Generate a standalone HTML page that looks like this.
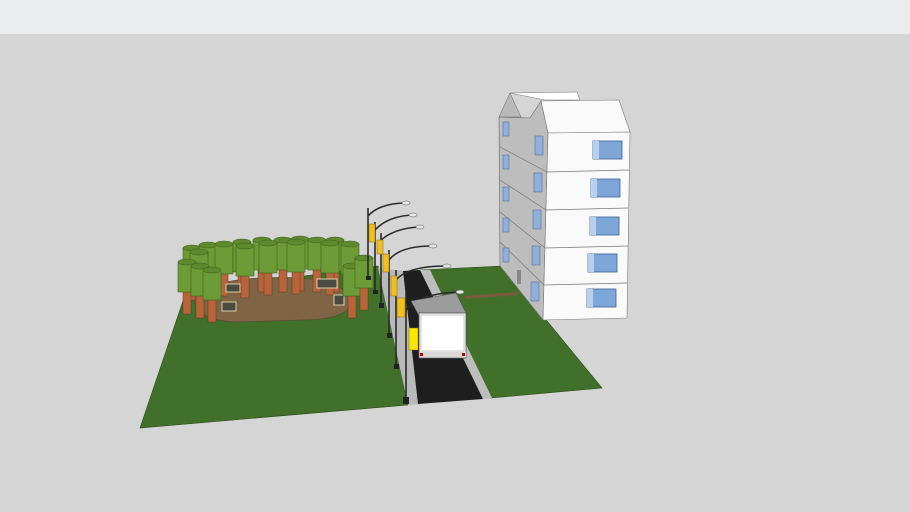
<!DOCTYPE html>
<html><head><style>
html,body{margin:0;padding:0;width:910px;height:512px;overflow:hidden;background:#d5d5d5;font-family:"Liberation Sans",sans-serif}
</style></head><body>
<svg width="910" height="512" viewBox="0 0 910 512" xmlns="http://www.w3.org/2000/svg">
<defs>
<g id="tr"><rect x="-4" y="26" width="8" height="26" fill="#b8643a" stroke="#5a3a20" stroke-width="0.5"/><rect x="-9" y="0" width="18" height="30" fill="#6d9b37" stroke="#3e5f1c" stroke-width="0.6"/><ellipse cx="0" cy="0" rx="9" ry="3" fill="#5d8a2c" stroke="#3e5f1c" stroke-width="0.5"/></g>
<g id="win"><rect x="0" y="0" width="29" height="18" fill="#7fa6d8" stroke="#3e5f8f" stroke-width="0.8"/><rect x="0" y="0" width="6" height="18" fill="#b8d0ee"/></g>
</defs>
<rect x="0" y="0" width="910" height="34" fill="#ebeced"/>
<polygon points="186,292 378,266 408,405 140,428" fill="#40702a" stroke="#2a4a1a" stroke-width="0.6"/>
<polygon points="420,270 502,266 602,388 490,398" fill="#40702a" stroke="#2a4a1a" stroke-width="0.6"/>
<polygon points="378,268 405,271 422,404 408,405" fill="#b9b9b9"/>
<polygon points="418,270 430,270 492,398 483,399" fill="#bdbdbd"/>
<polygon points="403,271 420,270 483,399 418,404" fill="#1e1e1e"/>
<polygon points="465,296 518,292 518,295 465,299" fill="#7a5c3c"/>
<path d="M205,288 Q240,275 300,278 Q352,282 350,305 Q345,320 300,320 L235,322 Q200,320 196,305 Z" fill="#7f6446" stroke="#5a4530" stroke-width="0.6"/>
<use href="#tr" x="192" y="248"/><use href="#tr" x="208" y="245"/><use href="#tr" x="224" y="244"/><use href="#tr" x="242" y="242"/><use href="#tr" x="262" y="240"/><use href="#tr" x="283" y="240"/><use href="#tr" x="300" y="239"/><use href="#tr" x="317" y="240"/><use href="#tr" x="335" y="240"/><use href="#tr" x="350" y="244"/>
<use href="#tr" x="199" y="252"/><use href="#tr" x="245" y="246"/><use href="#tr" x="268" y="243"/><use href="#tr" x="296" y="242"/><use href="#tr" x="330" y="243"/>
<rect x="226" y="284" width="14" height="8" fill="#4a4a40" stroke="#d8cfa8" stroke-width="1"/>
<rect x="222" y="302" width="14" height="9" fill="#4a4a40" stroke="#d8cfa8" stroke-width="1"/>
<rect x="317" y="279" width="20" height="9" fill="#4a4a40" stroke="#d8cfa8" stroke-width="1"/>
<rect x="334" y="295" width="10" height="10" fill="#4a4a40" stroke="#d8cfa8" stroke-width="1"/>
<use href="#tr" x="187" y="262"/><use href="#tr" x="200" y="266"/><use href="#tr" x="212" y="270"/><use href="#tr" x="352" y="266"/><use href="#tr" x="364" y="258"/>
<g stroke="#2a2a2a" stroke-width="1.6" fill="none">
<path d="M368,208 L368,278 M368,216 Q380,203 406,203"/>
<path d="M375,222 L375,292 M375,230 Q388,216 413,215"/>
<path d="M381,233 L381,305 M381,240 Q395,228 420,227"/>
<path d="M389,250 L389,335 M389,260 Q400,246 432,246"/>
<path d="M396,270 L396,366 M396,280 Q408,266 446,266"/>
<path d="M406,292 L406,402 M406,310 Q420,293 460,292"/>
</g>
<g fill="#e6e6e6" stroke="#555" stroke-width="0.5">
<ellipse cx="406" cy="203" rx="4" ry="2"/><ellipse cx="413" cy="215" rx="4" ry="2"/><ellipse cx="420" cy="227" rx="4" ry="2"/><ellipse cx="433" cy="246" rx="4" ry="2"/><ellipse cx="447" cy="266" rx="4" ry="2"/><ellipse cx="460" cy="292" rx="4" ry="2"/>
</g>
<g fill="#f0c020" stroke="#8a6a10" stroke-width="0.5">
<rect x="369" y="224" width="6" height="18"/><rect x="377" y="240" width="6" height="14"/><rect x="383" y="254" width="6" height="18"/><rect x="391" y="276" width="6" height="20"/><rect x="397" y="298" width="8" height="19"/><rect x="409" y="328" width="9" height="22" fill="#ffe800"/>
</g>
<g fill="#222"><rect x="366" y="276" width="5" height="4"/><rect x="373" y="290" width="5" height="4"/><rect x="379" y="303" width="5" height="5"/><rect x="387" y="333" width="5" height="5"/><rect x="394" y="364" width="5" height="5"/><rect x="403" y="397" width="6" height="7"/></g>
<polygon points="411,301 456,293 466,313 419,316" fill="#9c9c9c" stroke="#555" stroke-width="0.6"/>
<rect x="419" y="313" width="47" height="45" fill="#f4f4f4" stroke="#555" stroke-width="0.8"/>
<rect x="421" y="315" width="43" height="36" fill="#fff" stroke="#999" stroke-width="0.5"/>
<rect x="420" y="352" width="46" height="5" fill="#d8d8d8"/>
<rect x="420" y="353" width="3" height="3" fill="#c00"/><rect x="462" y="353" width="3" height="3" fill="#c00"/>
<polygon points="499,117 510,93 521,117" fill="#b9b9b9" stroke="#666" stroke-width="0.5"/>
<polygon points="510,93 577,92 580,100 545,100" fill="#fff" stroke="#777" stroke-width="0.5"/>
<polygon points="499,117 530,118 541,101 548,133 543,320 500,266" fill="#bdbdbd" stroke="#666" stroke-width="0.6"/>
<polygon points="541,101 619,100 630,132 548,133" fill="#fafafa" stroke="#777" stroke-width="0.6"/>
<polygon points="548,133 630,132 627,318 543,320" fill="#fafafa" stroke="#777" stroke-width="0.6"/>
<g stroke="#777" stroke-width="0.7">
<line x1="546" y1="172" x2="629" y2="170"/><line x1="545" y1="210" x2="628" y2="208"/><line x1="545" y1="248" x2="628" y2="246"/><line x1="544" y1="285" x2="627" y2="283"/>
<line x1="500" y1="147" x2="547" y2="172"/><line x1="500" y1="180" x2="546" y2="210"/><line x1="500" y1="212" x2="545" y2="248"/><line x1="500" y1="242" x2="544" y2="285"/>
</g>
<use href="#win" x="593" y="141"/><use href="#win" x="591" y="179"/><use href="#win" x="590" y="217"/><use href="#win" x="588" y="254"/><use href="#win" x="587" y="289"/>
<g fill="#8fb0dc" stroke="#4a5f80" stroke-width="0.5">
<rect x="535" y="136" width="8" height="19"/><rect x="534" y="173" width="8" height="19"/><rect x="533" y="210" width="8" height="19"/><rect x="532" y="246" width="8" height="19"/><rect x="531" y="282" width="8" height="19"/>
<rect x="503" y="122" width="6" height="14"/><rect x="503" y="155" width="6" height="14"/><rect x="503" y="187" width="6" height="14"/><rect x="503" y="218" width="6" height="14"/><rect x="503" y="248" width="6" height="14"/>
</g>
<rect x="517" y="270" width="4" height="14" fill="#888"/>
</svg>
</body></html>
